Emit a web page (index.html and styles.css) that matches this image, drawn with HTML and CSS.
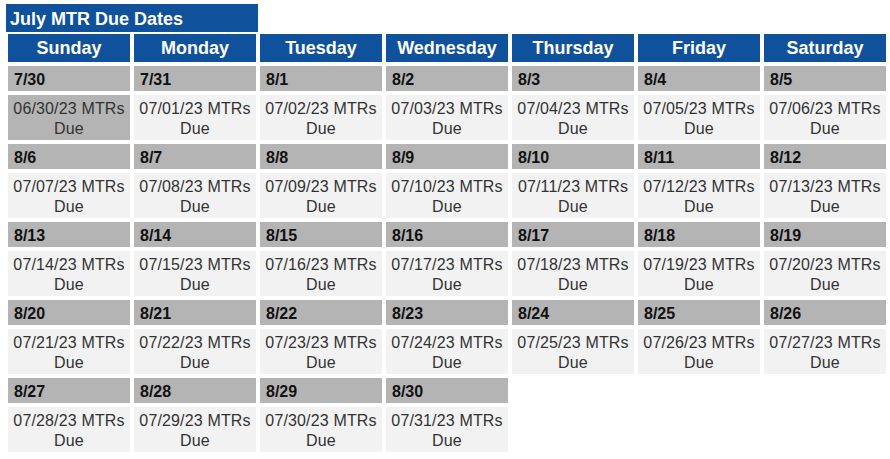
FILE: index.html
```html
<!DOCTYPE html>
<html>
<head>
<meta charset="utf-8">
<link rel="stylesheet" href="styles.css">
</head>
<body>
<div class="page">
  <div class="title">July MTR Due Dates</div>
  <div class="cal">
    <div class="dow">Sunday</div><div class="dow">Monday</div><div class="dow">Tuesday</div><div class="dow">Wednesday</div><div class="dow">Thursday</div><div class="dow">Friday</div><div class="dow">Saturday</div>

    <div class="date">7/30</div><div class="date">7/31</div><div class="date">8/1</div><div class="date">8/2</div><div class="date">8/3</div><div class="date">8/4</div><div class="date">8/5</div>
    <div class="due past">06/30/23 MTRs Due</div><div class="due">07/01/23 MTRs Due</div><div class="due">07/02/23 MTRs Due</div><div class="due">07/03/23 MTRs Due</div><div class="due">07/04/23 MTRs Due</div><div class="due">07/05/23 MTRs Due</div><div class="due">07/06/23 MTRs Due</div>

    <div class="date">8/6</div><div class="date">8/7</div><div class="date">8/8</div><div class="date">8/9</div><div class="date">8/10</div><div class="date">8/11</div><div class="date">8/12</div>
    <div class="due">07/07/23 MTRs Due</div><div class="due">07/08/23 MTRs Due</div><div class="due">07/09/23 MTRs Due</div><div class="due">07/10/23 MTRs Due</div><div class="due">07/11/23 MTRs Due</div><div class="due">07/12/23 MTRs Due</div><div class="due">07/13/23 MTRs Due</div>

    <div class="date">8/13</div><div class="date">8/14</div><div class="date">8/15</div><div class="date">8/16</div><div class="date">8/17</div><div class="date">8/18</div><div class="date">8/19</div>
    <div class="due">07/14/23 MTRs Due</div><div class="due">07/15/23 MTRs Due</div><div class="due">07/16/23 MTRs Due</div><div class="due">07/17/23 MTRs Due</div><div class="due">07/18/23 MTRs Due</div><div class="due">07/19/23 MTRs Due</div><div class="due">07/20/23 MTRs Due</div>

    <div class="date">8/20</div><div class="date">8/21</div><div class="date">8/22</div><div class="date">8/23</div><div class="date">8/24</div><div class="date">8/25</div><div class="date">8/26</div>
    <div class="due">07/21/23 MTRs Due</div><div class="due">07/22/23 MTRs Due</div><div class="due">07/23/23 MTRs Due</div><div class="due">07/24/23 MTRs Due</div><div class="due">07/25/23 MTRs Due</div><div class="due">07/26/23 MTRs Due</div><div class="due">07/27/23 MTRs Due</div>

    <div class="date">8/27</div><div class="date">8/28</div><div class="date">8/29</div><div class="date">8/30</div><div class="blank"></div><div class="blank"></div><div class="blank"></div>
    <div class="due">07/28/23 MTRs Due</div><div class="due">07/29/23 MTRs Due</div><div class="due">07/30/23 MTRs Due</div><div class="due">07/31/23 MTRs Due</div><div class="blank"></div><div class="blank"></div><div class="blank"></div>
  </div>
</div>
</body>
</html>
```
FILE: styles.css
```css
html, body {
  margin: 0;
  padding: 0;
  background: #ffffff;
}

.page {
  padding: 4px 0 0 6px;
  font-family: "Liberation Sans", Arial, sans-serif;
}

.title {
  width: 248px;
  height: 28px;
  padding-left: 4px;
  background: #0f519b;
  color: #ffffff;
  font-weight: bold;
  font-size: 18px;
  line-height: 31px;
}

.cal {
  display: grid;
  grid-template-columns: repeat(7, 122px);
  grid-auto-rows: auto;
  column-gap: 4px;
  row-gap: 4px;
  margin: 2px 0 0 2px;
}

.dow {
  height: 28px;
  background: #0f519b;
  color: #ffffff;
  font-weight: bold;
  font-size: 18px;
  line-height: 29px;
  text-align: center;
}

.date {
  height: 25px;
  background: #b4b4b4;
  color: #111111;
  font-weight: bold;
  font-size: 16px;
  line-height: 27px;
  padding-left: 6px;
}

.due {
  height: 45px;
  box-sizing: border-box;
  padding-top: 4px;
  background: #f2f2f2;
  color: #333333;
  font-size: 16px;
  letter-spacing: 0.15px;
  line-height: 20px;
  text-align: center;
}

.due.past {
  background: #b4b4b4;
}

.blank {
  height: 0;
}
```
